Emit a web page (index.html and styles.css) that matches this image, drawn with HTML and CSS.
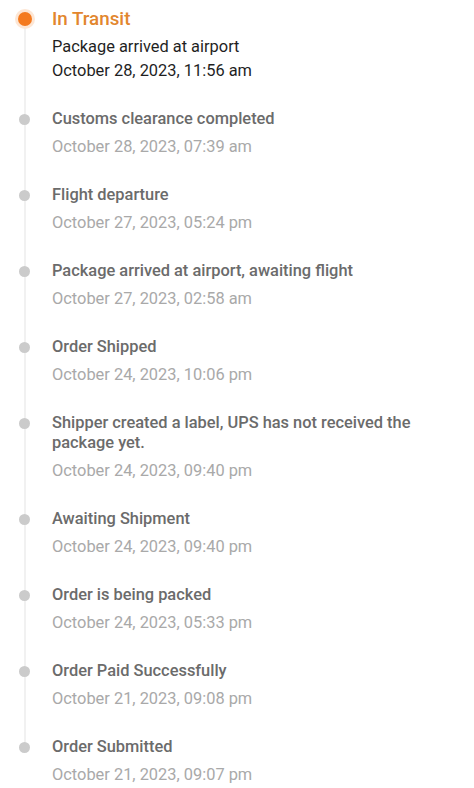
FILE: index.html
```html
<!DOCTYPE html>
<html lang="en">
<head>
  <meta charset="UTF-8">
  <meta name="viewport" content="width=device-width, initial-scale=1.0">
  <title>Tracking</title>
  <link rel="stylesheet" href="styles.css">
</head>
<body>

<ul class="timeline">
  <li class="step current">
    <div class="marker"><span class="dot"></span></div>
    <div class="content">
      <div class="title">In Transit</div>
      <div class="desc">Package arrived at airport</div>
      <div class="date">October 28, 2023, 11:56 am</div>
    </div>
  </li>
  <li class="step">
    <div class="marker"><span class="dot"></span></div>
    <div class="content">
      <div class="title">Customs clearance completed</div>
      <div class="date">October 28, 2023, 07:39 am</div>
    </div>
  </li>
  <li class="step">
    <div class="marker"><span class="dot"></span></div>
    <div class="content">
      <div class="title">Flight departure</div>
      <div class="date">October 27, 2023, 05:24 pm</div>
    </div>
  </li>
  <li class="step">
    <div class="marker"><span class="dot"></span></div>
    <div class="content">
      <div class="title">Package arrived at airport, awaiting flight</div>
      <div class="date">October 27, 2023, 02:58 am</div>
    </div>
  </li>
  <li class="step">
    <div class="marker"><span class="dot"></span></div>
    <div class="content">
      <div class="title">Order Shipped</div>
      <div class="date">October 24, 2023, 10:06 pm</div>
    </div>
  </li>
  <li class="step">
    <div class="marker"><span class="dot"></span></div>
    <div class="content">
      <div class="title">Shipper created a label, UPS has not received the package yet.</div>
      <div class="date">October 24, 2023, 09:40 pm</div>
    </div>
  </li>
  <li class="step">
    <div class="marker"><span class="dot"></span></div>
    <div class="content">
      <div class="title">Awaiting Shipment</div>
      <div class="date">October 24, 2023, 09:40 pm</div>
    </div>
  </li>
  <li class="step">
    <div class="marker"><span class="dot"></span></div>
    <div class="content">
      <div class="title">Order is being packed</div>
      <div class="date">October 24, 2023, 05:33 pm</div>
    </div>
  </li>
  <li class="step">
    <div class="marker"><span class="dot"></span></div>
    <div class="content">
      <div class="title">Order Paid Successfully</div>
      <div class="date">October 21, 2023, 09:08 pm</div>
    </div>
  </li>
  <li class="step last">
    <div class="marker"><span class="dot"></span></div>
    <div class="content">
      <div class="title">Order Submitted</div>
      <div class="date">October 21, 2023, 09:07 pm</div>
    </div>
  </li>
</ul>

</body>
</html>
```

FILE: styles.css
```css
body {
  font-family: Roboto, 'Liberation Sans', sans-serif;
  background: #fff;
  margin: 0;
  padding: 0;
}
.timeline {
  list-style: none;
  margin: 0;
  padding: 9px 20px 0 0;
}
.step {
  display: flex;
  align-items: stretch;
}
.marker {
  width: 52px;
  flex-shrink: 0;
  position: relative;
}
/* the vertical rail */
.marker::before {
  content: "";
  position: absolute;
  left: 24px;
  top: 0;
  bottom: 0;
  width: 2px;
  background: #f1f1f1;
}
.step.current .marker::before {
  top: 10px;
}
.step.last .marker::before {
  bottom: auto;
  height: 10px;
}
.dot {
  position: absolute;
  left: 19px;
  top: 5px;
  width: 11px;
  height: 11px;
  border-radius: 50%;
  background: #cbcbcb;
}
.step.current .dot {
  left: 18px;
  top: 3px;
  width: 14px;
  height: 14px;
  background: #f47a1f;
  box-shadow: 0 0 0 3px #fde6d4;
}
.content {
  padding-bottom: 28px;
}
.title {
  font-size: 16.4px;
  line-height: 20px;
  font-weight: 500;
  color: #6b6b6b;
  margin-bottom: 8px;
}
.step.current .title {
  font-size: 18.8px;
  color: #e2862e;
}
.desc {
  font-size: 16.4px;
  line-height: 20px;
  color: #1f1f1f;
  margin-bottom: 4px;
}
.date {
  font-size: 16.4px;
  line-height: 20px;
  color: #a9a9a9;
}
.step.current .date {
  color: #1f1f1f;
}
```
